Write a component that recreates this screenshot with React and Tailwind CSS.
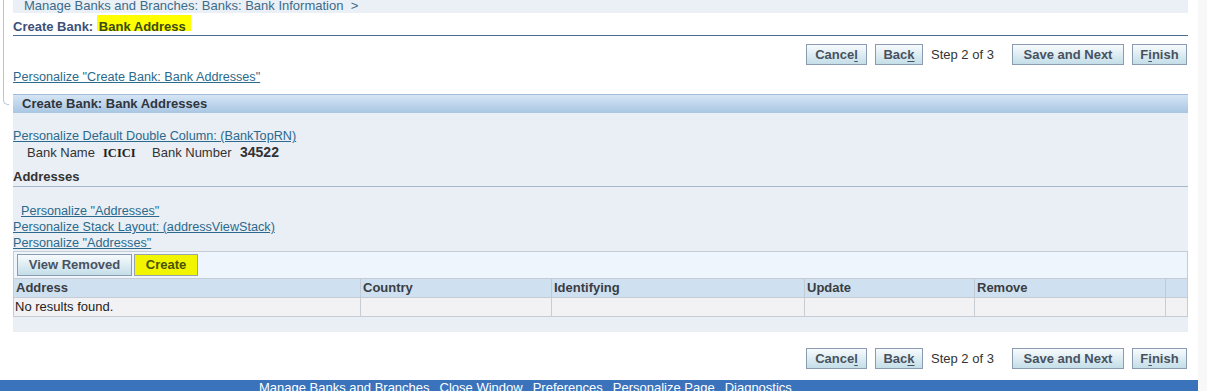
import React from "react";

const btn =
  "h-[21px] border border-[#8b9bb0] bg-gradient-to-b from-[#f7fbfd] to-[#c4dee8] text-[13px] font-bold text-[#48525f] leading-[19px] text-center";

function U({ children }) {
  return <span className="underline underline-offset-2">{children}</span>;
}

function TrainButtons() {
  return (
    <div className="flex justify-end items-center pr-[1px]">
      <div className={`${btn} w-[61px]`}>
        Cance<U>l</U>
      </div>
      <div className={`${btn} w-[48px] ml-[8px]`}>
        Bac<U>k</U>
      </div>
      <div className="ml-[8px] w-[81px] text-[13px] text-[#333]">Step 2 of 3</div>
      <div className={`${btn} w-[112px]`}>Save and Next</div>
      <div className={`${btn} w-[55px] ml-[8px]`}>
        F<U>i</U>nish
      </div>
    </div>
  );
}

function Link({ children, className = "" }) {
  return (
    <div className={`text-[12.65px] leading-[16px] text-[#2b6a8c] ${className}`}>
      <span className="underline">{children}</span>
    </div>
  );
}

const cols = [
  { label: "Address", w: "w-[346px]" },
  { label: "Country", w: "w-[191px]" },
  { label: "Identifying", w: "w-[253px]" },
  { label: "Update", w: "w-[170px]" },
  { label: "Remove", w: "w-[191px]" },
  { label: "", w: "flex-1" },
];

function AddressTable() {
  return (
    <div className="border border-[#c6ccd5]">
      <div className="h-[26px] bg-[#eef5fd] flex items-start pt-[2px] pl-[3px] gap-[2px]">
        <div className={`${btn} h-[22px] w-[115px] leading-[20px]`}>View Removed</div>
        <div className="h-[22px] w-[64px] border border-[#9aa3ad] bg-[#f2f500] text-[13px] font-bold text-[#4a5200] leading-[20px] text-center">
          Create
        </div>
      </div>
      <div className="flex h-[19px] bg-[#cfe0f0] border-t border-[#c6ccd5]">
        {cols.map((c, i) => (
          <div
            key={i}
            className={`${c.w} ${i ? "border-l border-[#c3cad3]" : ""} pl-[2px] text-[13px] font-bold text-[#3a3d42] leading-[18px]`}
          >
            {c.label}
          </div>
        ))}
      </div>
      <div className="flex h-[19px] bg-[#f2f2f4] border-t border-[#c6ccd5]">
        {cols.map((c, i) => (
          <div
            key={i}
            className={`${c.w} ${i ? "border-l border-[#c8ccd3]" : ""} pl-[1px] text-[13px] text-[#222] leading-[18px]`}
          >
            {i === 0 ? "No results found." : ""}
          </div>
        ))}
      </div>
    </div>
  );
}

export default function App() {
  return (
    <div className="w-[1207px] h-[391px] overflow-hidden flex bg-white [font-family:'Liberation_Sans',Arial,sans-serif]">
      <div className="w-[1198px] flex flex-col">
        <div className="h-[380px] flex">
          <div className="w-[13px] shrink-0">
            <div className="ml-[3px] w-[6px] h-[105px] border-l border-b border-[#b3c5d8] rounded-bl-[5px]" />
          </div>
          <div className="w-[1175px] flex flex-col">
            <div className="h-[13px] bg-[#ebeff6] pl-[11px] overflow-hidden">
              <span className="block text-[13px] leading-[11px] text-[#3b6c8b] whitespace-pre">
                Manage Banks and Branches: Banks: Bank Information  {">"}
              </span>
            </div>

            <div className="h-[23px] border-b border-[#4b6a93] flex items-end pb-[4px] text-[13px] font-bold">
              <span className="inline-block h-[16px] pt-[7px] leading-[9px] text-[#3c5079] whitespace-pre">
                Create Bank:{" "}
              </span>
              <span className="inline-block h-[16px] pt-[7px] leading-[9px] pl-[2px] pr-[5px] bg-[#ffff00] text-[#3b4a14]">
                Bank Address
              </span>
            </div>

            <div className="mt-[8px]">
              <TrainButtons />
            </div>

            <Link className="mt-[4px]">Personalize "Create Bank: Bank Addresses"</Link>

            <div className="mt-[9px] h-[19px] border-t border-[#a2bdd8] bg-gradient-to-b from-[#d5e5f4] to-[#a8c6e2] pl-[9px] text-[13px] font-bold text-[#30353d] leading-[18px]">
              Create Bank: Bank Addresses
            </div>

            <div className="bg-[#eaeef5] pb-[15px]">
              <Link className="mt-[15px]">Personalize Default Double Column: (BankTopRN)</Link>
              <div className="flex items-baseline text-[13px] leading-[16px] text-[#333] pl-[14px]">
                <span className="w-[76px]">Bank Name</span>
                <span className="w-[49px] font-bold text-[12.5px] [font-family:'Liberation_Serif',serif] text-[#222]">
                  ICICI
                </span>
                <span className="w-[88px]">Bank Number</span>
                <span className="font-bold text-[14px] text-[#333]">34522</span>
              </div>
              <div className="mt-[8px] pb-[1px] border-b border-[#a8b8ca] text-[13px] font-bold leading-[16px] text-[#333]">
                Addresses
              </div>
              <Link className="mt-[16px] pl-[8px]">Personalize "Addresses"</Link>
              <Link>Personalize Stack Layout: (addressViewStack)</Link>
              <Link>Personalize "Addresses"</Link>
              <AddressTable />
            </div>

            <div className="mt-[16px]">
              <TrainButtons />
            </div>
          </div>
        </div>
        <div className="h-[11px] bg-[#3a73bc] overflow-hidden pl-[259px]">
          <div className="flex gap-[10px] text-[13px] leading-[16px] text-white whitespace-nowrap">
            <span>Manage Banks and Branches</span>
            <span>Close Window</span>
            <span>Preferences</span>
            <span>Personalize Page</span>
            <span>Diagnostics</span>
          </div>
        </div>
      </div>
      <div className="w-[9px] bg-[#f8f8f8]" />
    </div>
  );
}
